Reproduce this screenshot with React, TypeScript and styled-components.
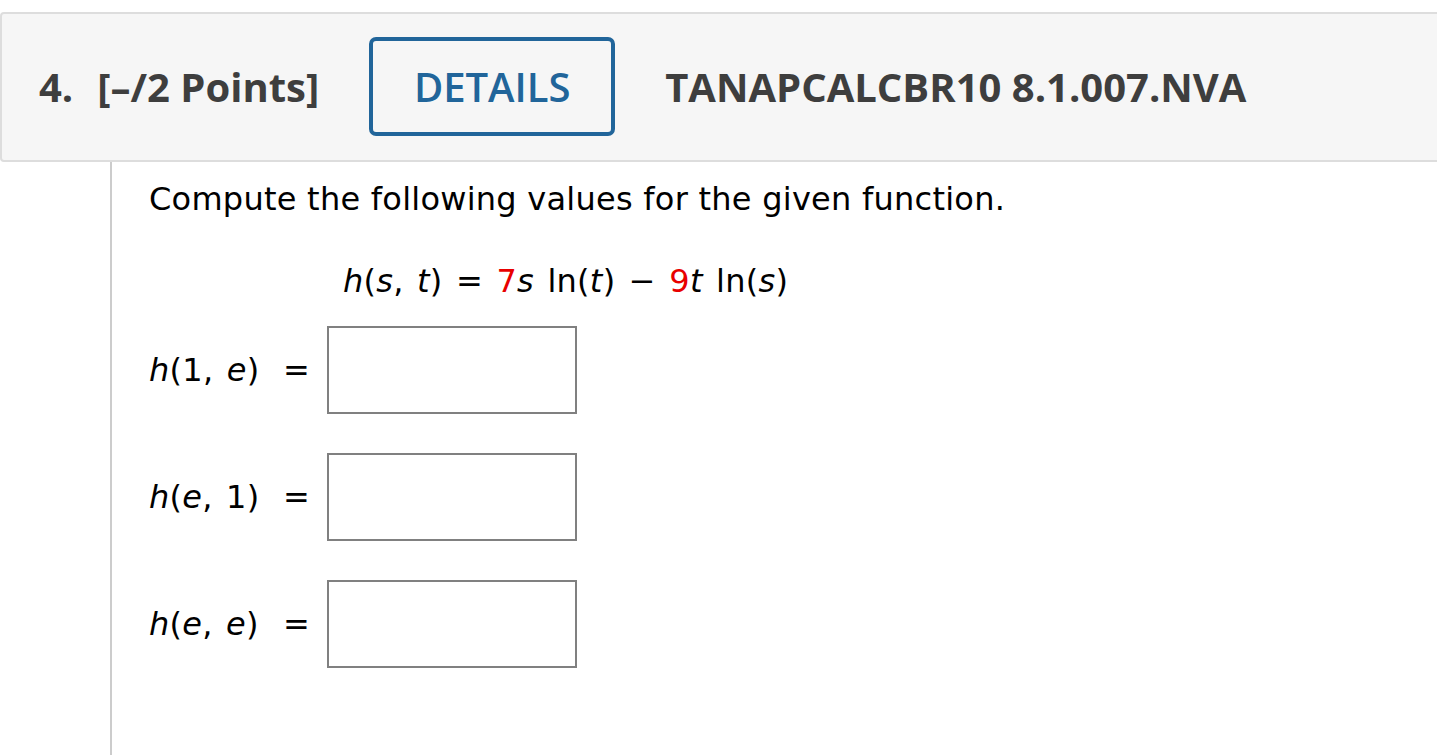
import React from "react";
import styled, { createGlobalStyle } from "styled-components";

const Global = createGlobalStyle`
  html, body { margin: 0; padding: 0; background: #ffffff; }
  body { overflow: hidden; }
`;

const Page = styled.div`
  width: 1437px;
  height: 755px;
  overflow: hidden;
  padding-top: 12px;
  box-sizing: border-box;
`;

const Header = styled.header`
  display: flex;
  align-items: center;
  width: 1460px;
  height: 150px;
  box-sizing: border-box;
  background: #f6f6f6;
  border: 2px solid #dddddd;
  border-radius: 4px 0 0 4px;
  padding-left: 37px;
  padding-bottom: 2px;
  font-family: "Open Sans", sans-serif;
  font-weight: 700;
  font-size: 40px;
  color: #3e3e3e;
`;

const Number = styled.span`
  margin-right: 24px;
`;

const Points = styled.span`
  margin-right: 50px;
`;

const DetailsButton = styled.button`
  width: 246px;
  height: 99px;
  box-sizing: border-box;
  border: 4px solid #21659a;
  border-radius: 7px;
  background: transparent;
  color: #21659a;
  font-family: "Open Sans", sans-serif;
  font-weight: 600;
  font-size: 40px;
  padding: 0;
  margin-right: 50px;
  margin-top: 1px;
`;

const Code = styled.span``;

const Body = styled.section`
  margin-left: 110px;
  border-left: 2px solid #cccccc;
  padding-left: 37px;
  padding-top: 17px;
  height: 600px;
  font-family: "DejaVu Sans", Verdana, sans-serif;
  font-size: 32px;
  letter-spacing: 0.25px;
  word-spacing: 3px;
  color: #000;
`;

const Prompt = styled.p`
  margin: 0;
  line-height: 40px;
  word-spacing: 0;
`;

const Formula = styled.div`
  margin: 42px 0 0 194px;
  line-height: 40px;
`;

const I = styled.i`
  font-style: italic;
`;

const Red = styled.span`
  color: #e80000;
`;

const Rows = styled.div`
  display: flex;
  flex-direction: column;
  gap: 39px;
  margin-top: 25px;
`;

const Row = styled.div`
  display: flex;
  align-items: center;
`;

const Label = styled.span`
  width: 134px;
  white-space: nowrap;
`;

const Eq = styled.span`
  width: 44px;
`;

const Answer = styled.input`
  width: 250px;
  height: 88px;
  box-sizing: border-box;
  border: 2px solid #808080;
  background: #fff;
  margin: 0;
  padding: 0;
`;

const rows: [string, string][] = [
  ["1", "e"],
  ["e", "1"],
  ["e", "e"],
];

const Arg = ({ v }: { v: string }) => (v === "e" ? <I>e</I> : <>{v}</>);

export default function App() {
  return (
    <Page>
      <Global />
      <Header>
        <Number>4.</Number>
        <Points>[–/2 Points]</Points>
        <DetailsButton>DETAILS</DetailsButton>
        <Code>TANAPCALCBR10 8.1.007.NVA</Code>
      </Header>
      <Body>
        <Prompt>Compute the following values for the given function.</Prompt>
        <Formula>
          <I>h</I>(<I>s</I>, <I>t</I>) = <Red>7</Red>
          <I>s</I> ln(<I>t</I>) − <Red>9</Red>
          <I>t</I> ln(<I>s</I>)
        </Formula>
        <Rows>
          {rows.map(([a, b], i) => (
            <Row key={i}>
              <Label>
                <I>h</I>(<Arg v={a} />, <Arg v={b} />)
              </Label>
              <Eq>=</Eq>
              <Answer aria-label={`answer ${i + 1}`} />
            </Row>
          ))}
        </Rows>
      </Body>
    </Page>
  );
}
